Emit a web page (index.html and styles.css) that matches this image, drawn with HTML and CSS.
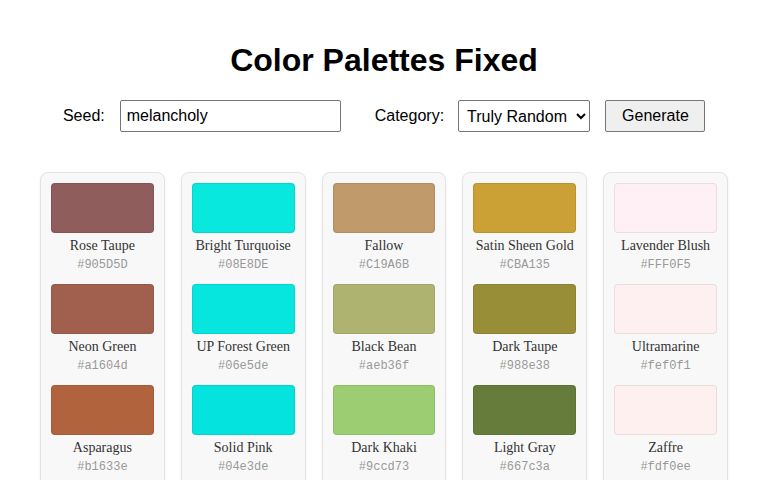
FILE: index.html
```html
<!DOCTYPE html>
<html lang="en">
<head>
  <meta charset="UTF-8">
  <meta name="viewport" content="width=device-width, initial-scale=1.0">
  <title>Color Palettes Fixed</title>
  <link rel="stylesheet" href="styles.css">
</head>
<body>
<!-- Header -->
<h1>Color Palettes Fixed</h1>

<!-- Controls -->
<div class="controls">
  <div class="control">
    <label for="seed">Seed:</label>
    <input type="text" id="seed" value="melancholy">
  </div>
  <div class="control">
    <label for="category">Category:</label>
    <select id="category">
      <option>Truly Random</option>
      <option>Pastel</option>
      <option>Earth</option>
    </select>
  </div>
  <button type="button" class="generate-btn">Generate</button>
</div>

<!-- Palettes -->
<div class="palettes">
  <div class="palette">
    <div class="color"><div class="swatch" style="background:#905D5D"></div><div class="name">Rose Taupe</div><div class="hex">#905D5D</div></div>
    <div class="color"><div class="swatch" style="background:#a1604d"></div><div class="name">Neon Green</div><div class="hex">#a1604d</div></div>
    <div class="color"><div class="swatch" style="background:#b1633e"></div><div class="name">Asparagus</div><div class="hex">#b1633e</div></div>
  </div>
  <div class="palette">
    <div class="color"><div class="swatch" style="background:#08E8DE"></div><div class="name">Bright Turquoise</div><div class="hex">#08E8DE</div></div>
    <div class="color"><div class="swatch" style="background:#06e5de"></div><div class="name">UP Forest Green</div><div class="hex">#06e5de</div></div>
    <div class="color"><div class="swatch" style="background:#04e3de"></div><div class="name">Solid Pink</div><div class="hex">#04e3de</div></div>
  </div>
  <div class="palette">
    <div class="color"><div class="swatch" style="background:#C19A6B"></div><div class="name">Fallow</div><div class="hex">#C19A6B</div></div>
    <div class="color"><div class="swatch" style="background:#aeb36f"></div><div class="name">Black Bean</div><div class="hex">#aeb36f</div></div>
    <div class="color"><div class="swatch" style="background:#9ccd73"></div><div class="name">Dark Khaki</div><div class="hex">#9ccd73</div></div>
  </div>
  <div class="palette">
    <div class="color"><div class="swatch" style="background:#CBA135"></div><div class="name">Satin Sheen Gold</div><div class="hex">#CBA135</div></div>
    <div class="color"><div class="swatch" style="background:#988e38"></div><div class="name">Dark Taupe</div><div class="hex">#988e38</div></div>
    <div class="color"><div class="swatch" style="background:#667c3a"></div><div class="name">Light Gray</div><div class="hex">#667c3a</div></div>
  </div>
  <div class="palette">
    <div class="color"><div class="swatch" style="background:#FFF0F5"></div><div class="name">Lavender Blush</div><div class="hex">#FFF0F5</div></div>
    <div class="color"><div class="swatch" style="background:#fef0f1"></div><div class="name">Ultramarine</div><div class="hex">#fef0f1</div></div>
    <div class="color"><div class="swatch" style="background:#fdf0ee"></div><div class="name">Zaffre</div><div class="hex">#fdf0ee</div></div>
  </div>
</div>
</body>
</html>
```

FILE: styles.css
```css
/* Base */
* {
  box-sizing: border-box;
}

body {
  margin: 0;
  padding: 21px 40px 20px;
  background-color: #fff;
  color: #000;
  font-family: 'Liberation Sans', Arial, sans-serif;
}

h1 {
  margin: 21px 0;
  font-size: 32px;
  line-height: 37px;
  text-align: center;
}

/* Controls */
.controls {
  display: flex;
  justify-content: center;
  align-items: center;
  gap: 15px;
  font-size: 16px;
}

.control {
  display: flex;
  align-items: center;
  gap: 15px;
  margin-right: 19px;
}

.control:nth-child(2) {
  gap: 14px;
  margin-right: 18px;
}

.control input,
.control select,
.generate-btn {
  height: 32px;
  font-family: 'Liberation Sans', Arial, sans-serif;
  font-size: 16px;
  color: #000;
}

.control input {
  width: 221px;
  padding: 0 6px;
  border: 1px solid #767676;
  border-radius: 2px;
}

.control select {
  width: 132px;
  padding: 0 2px 0 4px;
  border: 1px solid #767676;
  border-radius: 2px;
  background-color: #fff;
}

.generate-btn {
  width: 100px;
  margin-left: -18px;
  padding: 0 16px;
  background-color: #efefef;
  border: 1px solid #767676;
  border-radius: 2px;
}

/* Palettes */
.palettes {
  display: grid;
  grid-template-columns: repeat(5, 1fr);
  gap: 16px;
  margin-top: 40px;
}

.palette {
  background-color: #f8f8f8;
  border: 1px solid #e4e4e4;
  border-radius: 8px;
  box-shadow: 0 1px 3px rgba(0,0,0,0.06);
  padding: 10px 10px 4px;
}

.color {
  margin-bottom: 11px;
  text-align: center;
}

.swatch {
  height: 50px;
  border: 1px solid rgba(0,0,0,0.08);
  border-radius: 4px;
}

.name {
  margin-top: 4px;
  font-family: 'Liberation Serif', 'Times New Roman', serif;
  font-size: 14px;
  line-height: 17px;
  color: #333;
}

.hex {
  margin-top: 4px;
  font-family: 'Liberation Mono', 'Courier New', monospace;
  font-size: 12px;
  line-height: 15px;
  color: #999;
}
```
